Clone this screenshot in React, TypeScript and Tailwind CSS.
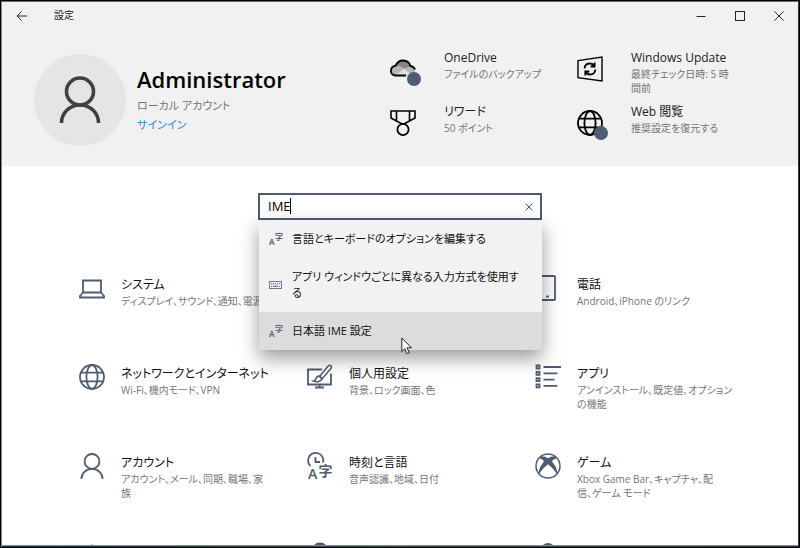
import { useState, type ReactNode } from 'react';

// --- Tipos ---

interface TileData {
    id: string;
    title?: string;
    description?: string;
    icon?: ReactNode;
}

interface SuggestionData {
    label: string;
    icon: ReactNode;
}

// --- Icons ---

function Icon({ children }: { children: ReactNode }) {
    return (
        <svg
            viewBox="0 0 26 26"
            fill="none"
            stroke="currentColor"
            strokeWidth="1.8"
            aria-hidden="true"
            className="size-[26px] shrink-0 overflow-visible"
        >
            {children}
        </svg>
    );
}

const globe = (
    <>
        <circle cx="13" cy="13" r="12" />
        <ellipse cx="13" cy="13" rx="5.6" ry="12" />
        <path d="M2 8.6h22M2 17.4h22" />
    </>
);

const person = (
    <>
        <circle cx="13" cy="8.4" r="7.400" />
        <path d="M2.4 26c0-5.600 4.600-10.200 10.600-10.200s10.600 4.600 10.600 10.200" />
    </>
);

function LanguageIcon() {
    return (
        <svg viewBox="0 0 13 14" fill="#5a697c" aria-hidden="true" className="h-[14px] w-[13px] shrink-0 overflow-visible font-bold">
            <text x="0" y="13" fontSize="8">A</text>
            <text x="6" y="8" fontSize="8">字</text>
        </svg>
    );
}

function KeyboardIcon() {
    return (
        <svg viewBox="0 0 13 14" fill="none" stroke="#6b798a" aria-hidden="true" className="h-[14px] w-[13px] shrink-0">
            <rect x=".5" y="3.500" width="12" height="7" />
            <path d="M2 5.500h9M2.500 7h8" strokeDasharray="1 1" />
            <path d="M2 8.500h1M4 8.500h5M10 8.500h1" />
        </svg>
    );
}

function StatusDot() {
    return <span className="absolute -right-[5px] -bottom-[4px] size-[14px] rounded-full bg-[#4d5c70]" />;
}

// --- Dados ---

const statusItems = [
    {
        title: 'OneDrive',
        description: 'ファイルのバックアップ',
        dot: true,
        icon: (
            <Icon>
                <path d="M5 19.500C2.500 19 .8 17 .9 14.700 1 11.800 3 10 5.500 9.800 7 6.500 10 4.300 13.400 4.500c3.600.2 6 2.300 7 5.500 2.500.4 4.600 2.300 4.700 4.800.1 2.700-1.800 4.700-4.600 4.700z" fill="#b5b5b5" stroke="none" />
                <path d="M5.500 9.800C7 6.500 10 4.300 13.400 4.500c3.600.2 6 2.300 7 5.500l-6 2.600-4.600-2.500z" fill="#858585" stroke="none" />
                <path d="M5 19.300l9.400-6.500 7 6.500z" fill="#dedede" stroke="none" />
                <path d="M16 19.500H5.500C2.800 19.300.8 17.300.9 14.700 1 11.900 3 10 5.500 9.800 7 6.500 10 4.300 13.400 4.500c3.600.2 6 2.300 7 5.500 2.300.4 4 1.700 4.600 3.600" />
            </Icon>
        ),
    },
    {
        title: 'Windows Update',
        description: '最終チェック日時: 5 時\n間前',
        icon: (
            <Icon>
                <path d="M1 4.600L25 1v24L1 21.600z" strokeWidth="1.4" />
                <path d="M7.500 12.500c.3-3 2.600-5 5.400-5 2 0 3.500.9 4.500 2.500M17.600 6.500V10.500h-4M18.400 13.500c-.3 3-2.600 5-5.400 5-2 0-3.500-.9-4.500-2.500M8.300 19.500v-4h4" />
            </Icon>
        ),
    },
    {
        title: 'リワード',
        description: '50 ポイント',
        icon: (
            <Icon>
                <path d="M1 1h24v7l-11 6h-2L1 8zM6.500 1v9.500M19.500 1v9.500" strokeWidth="1.6" />
                <circle cx="13" cy="19.500" r="5.600" />
            </Icon>
        ),
    },
    {
        title: 'Web 閲覧',
        description: '推奨設定を復元する',
        dot: true,
        icon: <Icon>{globe}</Icon>,
    },
];

const suggestions: SuggestionData[] = [
    { label: '言語とキーボードのオプションを編集する', icon: <LanguageIcon /> },
    { label: 'アプリ ウィンドウごとに異なる入力方式を使用する', icon: <KeyboardIcon /> },
    { label: '日本語 IME 設定', icon: <LanguageIcon /> },
];

const tiles: TileData[] = [
    {
        id: 'system',
        title: 'システム',
        description: 'ディスプレイ、サウンド、通知、電源',
        icon: (
            <Icon>
                <path d="M4 5.500h18v12H4zM4 17.500L1 21v1.500h24V21l-3-3.500" />
            </Icon>
        ),
    },
    { id: 'devices' },
    {
        id: 'phone',
        title: '電話',
        description: 'Android、iPhone のリンク',
        icon: (
            <Icon>
                <rect x="5" y="1" width="15" height="24" rx="1" />
                <path d="M11 21.500h3" />
            </Icon>
        ),
    },
    {
        id: 'network',
        title: 'ネットワークとインターネット',
        description: 'Wi-Fi、機内モード、VPN',
        icon: <Icon>{globe}</Icon>,
    },
    {
        id: 'personal',
        title: '個人用設定',
        description: '背景、ロック画面、色',
        icon: (
            <Icon>
                <path d="M15 5.500H1v15h23V9.500M12.500 20.500v3M8 23.500h9" />
                <path d="M12.500 12.500L21 2.200c1-1 2.300-1 3-.3s.6 1.800-.3 2.800L15 15z" strokeWidth="1.5" />
                <path d="M12.500 12c-2 0-3 1-3.400 2.500-.3 1.300-1 2.200-2.600 2.500 3.800 1.600 7.600.6 8.700-2.500z" strokeWidth="1.5" />
            </Icon>
        ),
    },
    {
        id: 'apps',
        title: 'アプリ',
        description: 'アンインストール、既定値、オプション\nの機能',
        icon: (
            <Icon>
                <path d="M1.500 1.500h3v3h-3zM1.500 7.800h3v3h-3zM1.500 14.100h3v3h-3zM1.500 20.400h3v3h-3zM8.500 3H26M8.500 9.300H22.500M8.500 15.600H19.500M8.500 21.900H22.500" />
            </Icon>
        ),
    },
    {
        id: 'accounts',
        title: 'アカウント',
        description: 'アカウント、メール、同期、職場、家\n族',
        icon: <Icon>{person}</Icon>,
    },
    {
        id: 'time',
        title: '時刻と言語',
        description: '音声認識、地域、日付',
        icon: (
            <Icon>
                <path d="M3.500 13A7.600 7.600 0 1 1 16 9.500M8.500 4v5H13" />
                <g fill="currentColor" stroke="none" fontWeight="600">
                    <text x="1" y="26" fontSize="14">A</text>
                    <text x="11.500" y="23" fontSize="14">字</text>
                </g>
            </Icon>
        ),
    },
    {
        id: 'gaming',
        title: 'ゲーム',
        description: 'Xbox Game Bar、キャプチャ、配\n信、ゲーム モード',
        icon: (
            <Icon>
                <circle cx="13" cy="13" r="12" strokeWidth="1.5" />
                <path
                    d="M5 4.200C7 2.300 10 3.500 13 5.200 16 3.500 19 2.300 21 4.200L20.500 6c-1.300-.2-2.500.8-3.600 2.600 3.500 4.200 6.100 8.700 5.300 13.400-1.800-4-4.900-7.500-9.200-10.800-4.300 3.300-7.400 6.800-9.200 10.800C3 17.300 5.600 12.800 9.100 8.600 8 6.800 6.800 5.800 5.500 6z"
                    fill="currentColor"
                    stroke="none"
                />
            </Icon>
        ),
    },
    { id: 'access', icon: <Icon><circle cx="13" cy="4.500" r="1" /></Icon> },
    { id: 'search', icon: <Icon><circle cx="13" cy="9" r="7.500" fill="currentColor" /></Icon> },
    { id: 'privacy', icon: <Icon><circle cx="13" cy="8.500" r="6.500" fill="currentColor" /></Icon> },
];

// --- Componentes ---

function TitleBar() {
    return (
        <div className="flex h-[27px] items-center text-[#222]">
            <button aria-label="戻る" className="flex h-full w-[40px] items-center justify-center">
                <svg viewBox="0 0 12 12" fill="none" stroke="currentColor" className="size-3">
                    <path d="M11 6H1M5.500 1.500L1 6l4.500 4.500" />
                </svg>
            </button>
            <span className="ml-3 flex-1 text-[10px]">設定</span>
            <button aria-label="最小化" className="flex h-full w-[39px] items-center justify-center">
                <svg viewBox="0 0 10 10" fill="none" stroke="currentColor" className="size-[10px]">
                    <path d="M.5 5.500h9" />
                </svg>
            </button>
            <button aria-label="最大化" className="flex h-full w-[39px] items-center justify-center">
                <svg viewBox="0 0 10 10" fill="none" stroke="currentColor" className="size-[10px]">
                    <rect x=".5" y=".5" width="9" height="9" />
                </svg>
            </button>
            <button aria-label="閉じる" className="flex h-full w-[39px] items-center justify-center">
                <svg viewBox="0 0 10 10" fill="none" stroke="currentColor" className="size-[10px]">
                    <path d="M.5.500l9 9M9.500.500l-9 9" />
                </svg>
            </button>
        </div>
    );
}

function SearchBox() {
    const [query, setQuery] = useState('IME');

    return (
        <div className="relative z-10 mx-auto w-[284px]">
            <div className="flex h-[27px] items-center border-2 border-[#4d5c70] bg-white">
                <input
                    aria-label="設定の検索"
                    value={query}
                    onChange={e => setQuery(e.target.value)}
                    className="min-w-0 flex-1 bg-transparent pl-2 text-[13px] text-black outline-none"
                />
                <button aria-label="クリア" onClick={() => setQuery('')} className="flex h-full w-[22px] items-center justify-center">
                    <svg viewBox="0 0 8 8" fill="none" stroke="#555" className="size-2">
                        <path d="M.5.5l7 7M7.500.5l-7 7" />
                    </svg>
                </button>
            </div>
            {/* Cursor de texto */}
            <span className="absolute top-[5px] left-[32px] h-4 w-px bg-black" />

            <ul className="absolute top-full right-0 left-px bg-[#f2f2f2] shadow-[0_8px_18px_rgba(0,0,0,0.4)]">
                {suggestions.map((item, i) => (
                    <li key={item.label}>
                        <button
                            className={`flex w-full items-center gap-[10px] py-[11px] pr-4 pl-[10px] text-left text-[11px] leading-4 text-[#111] ${i === 2 ? 'bg-[#dcdcdc]' : ''}`}
                        >
                            {item.icon}
                            <span>{item.label}</span>
                        </button>
                    </li>
                ))}
            </ul>

            <svg viewBox="0 0 12 18" className="absolute top-[144px] left-[143px] h-[18px] w-3" aria-hidden="true">
                <path d="M.8 1v13.500l3-2.900 2.200 5 2.200-1-2.200-4.800H10.500z" fill="#fff" stroke="#222" />
            </svg>
        </div>
    );
}

function Tile({ tile }: { tile: TileData }) {
    return (
        <a href={`#${tile.id}`} className="flex gap-4 px-[21px] pt-[11px] text-[#4d5c70]">
            {tile.icon}
            <span className="min-w-0 whitespace-pre">
                <span className="block text-xs leading-[19px] text-[#111]">{tile.title}</span>
                <span className="block text-[10px] leading-[14px] text-[#757575]">{tile.description}</span>
            </span>
        </a>
    );
}

export default function App() {
    return (
        <div className="h-screen border border-black font-['Open_Sans','Noto_Sans_CJK_JP',sans-serif] [font-feature-settings:'palt']">
            <div className="flex h-full flex-col overflow-hidden border-x border-t border-t-[#6b6b6b] border-r-[#2c3a3a] border-l-[#8a8a8a] bg-white">
                <header className="shrink-0 bg-[#f1f1f1]">
                    <TitleBar />
                    <div className="flex justify-between pt-[19px] pr-[34px] pb-[10px] pl-8">
                        <div className="flex gap-[11px] pt-[6px]">
                            <div className="flex size-[92px] items-center justify-center rounded-full bg-[#e5e5e5] text-[#404040]">
                                <svg viewBox="0 0 42 48" fill="none" stroke="currentColor" strokeWidth="3.600" className="h-[48px] w-[42px]" aria-hidden="true">
                                    <circle cx="21" cy="15.500" r="13.500" />
                                    <path d="M2.500 47c0-10 8-18 18.500-18s18.500 8 18.500 18" />
                                </svg>
                            </div>
                            <div className="pt-[10px]">
                                <h1 className="text-[22px] leading-[30px] font-semibold text-black">Administrator</h1>
                                <p className="pt-[2px] text-[11px] leading-[19px] text-[#757575]">ローカル アカウント</p>
                                <a href="#signin" className="block text-[11px] leading-[19px] text-[#1e90d2]">サインイン</a>
                            </div>
                        </div>
                        <div className="grid auto-rows-[54px] grid-cols-[187px_187px]">
                            {statusItems.map(item => (
                                <a key={item.title} href="#status" className="flex gap-7 text-black">
                                    <span className="relative mt-2 size-[26px]">
                                        {item.icon}
                                        {item.dot && <StatusDot />}
                                    </span>
                                    <span className="whitespace-pre">
                                        <span className="block text-xs leading-[19px] text-[#222]">{item.title}</span>
                                        <span className="block text-[10px] leading-[14px] text-[#757575]">{item.description}</span>
                                    </span>
                                </a>
                            ))}
                        </div>
                    </div>
                </header>

                <main className="min-h-0 flex-1 overflow-hidden pt-[27px]">
                    <SearchBox />
                    <nav className="mt-11 grid auto-rows-[89px] grid-cols-[repeat(auto-fill,228px)] justify-center">
                        {tiles.map(tile => (
                            <Tile key={tile.id} tile={tile} />
                        ))}
                    </nav>
                </main>

                {/* Faixa do papel de parede atrás da janela */}
                <footer className="h-[2px] shrink-0 border-t border-[#7d8c90] bg-linear-to-r from-[#0f3a44] via-[#3f4a4a] to-[#3a3a3a]" />
            </div>
        </div>
    );
}
